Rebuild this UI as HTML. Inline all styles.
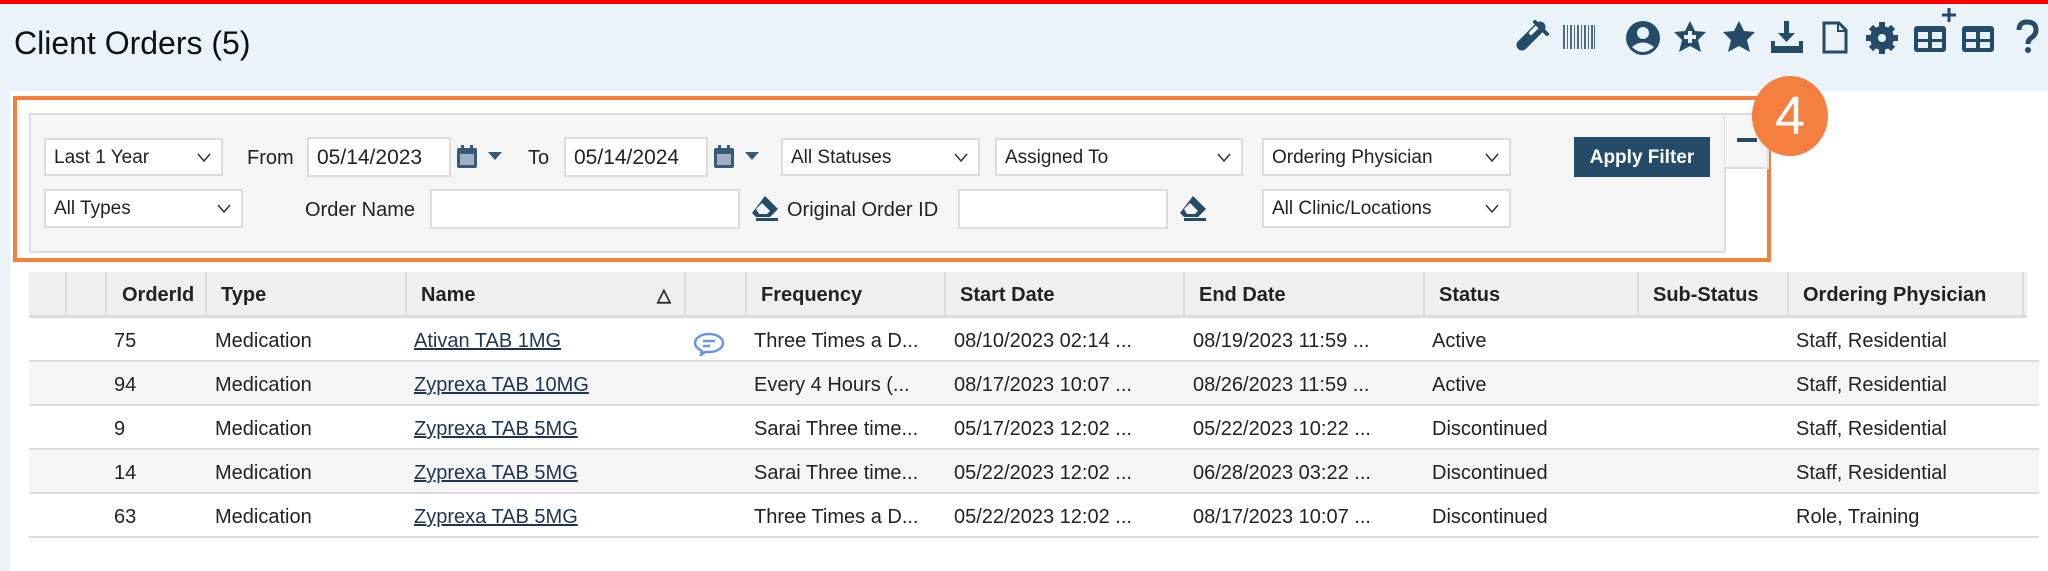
<!DOCTYPE html>
<html><head><meta charset="utf-8"><style>
*{margin:0;padding:0;box-sizing:border-box}
body{width:2048px;height:571px;position:relative;overflow:hidden;background:#fff;font-family:"Liberation Sans",sans-serif;color:#222}
.a{position:absolute}
.sel,.inp{position:absolute;background:#fff;border:2px solid #dcdcdc;font-size:19px;line-height:36px;padding-left:8px;color:#222}
.sel svg{position:absolute;right:10px;top:13px}
.lbl{position:absolute;font-size:20px;color:#222}
.th{position:absolute;top:272px;height:46px;border-right:2px solid #dcdcdc;font-weight:bold;font-size:20px;line-height:46px;padding-left:14px}
.row{position:absolute;left:29px;width:2010px;height:44px;border-bottom:2px solid #dcdcdc}
.c{position:absolute;font-size:20px;line-height:44px;white-space:nowrap}
.lk{color:#1d3550;text-decoration:underline}
</style></head><body>
<div class="a" style="left:0;top:0;width:2048px;height:4px;background:#f00"></div>
<div class="a" style="left:0;top:4px;width:2048px;height:87px;background:#eaf2fa"></div>
<div class="a" style="left:0;top:91px;width:10px;height:480px;background:#eaf2fa"></div>
<div class="a" style="left:14px;top:25px;font-size:32px;color:#111">Client Orders (5)</div>

<!-- header icons -->
<svg class="a" style="left:1510px;top:4px" width="535" height="54" viewBox="1510 4 535 54" fill="#244b68">
<path d="M1540 27 L1522 45" stroke="#244b68" stroke-width="11" stroke-linecap="round"/>
<path d="M1538 26 L1531 33" stroke="#eaf2fa" stroke-width="4" stroke-linecap="round"/>
<path d="M1535 22 L1547 34" stroke="#244b68" stroke-width="4" stroke-linecap="round"/>
<g fill="#4a6a88"><rect x="1563" y="25" width="2" height="24"/><rect x="1567" y="25" width="1" height="24"/><rect x="1570" y="25" width="2" height="24"/><rect x="1574" y="25" width="1" height="24"/><rect x="1577" y="25" width="2" height="24"/><rect x="1581" y="25" width="1" height="24"/><rect x="1584" y="25" width="2" height="24"/><rect x="1588" y="25" width="1" height="24"/><rect x="1591" y="25" width="2" height="24"/><rect x="1594" y="25" width="1" height="24"/></g>
<circle cx="1643" cy="38" r="17"/><circle cx="1643" cy="33" r="6" fill="#eaf2fa"/><path d="M1632 47 q11 -9 22 0 q-5 5 -11 5 q-6 0 -11 -5z" fill="#eaf2fa"/>
<path d="M1690 21 l5 10 11 1 -8 8 3 12 -11 -6 -11 6 3 -12 -8 -8 11 -1z"/><path d="M1688 31h4v4h4v4h-4v4h-4v-4h-4v-4h4z" fill="#eaf2fa"/>
<path d="M1739 21 l5 10 11 1 -8 8 3 12 -11 -6 -11 6 3 -12 -8 -8 11 -1z"/>
<path d="M1784 21h5v12h6l-8.5 9 -8.5 -9h6z"/><path d="M1771 41h4v5h24v-5h4v12h-32z"/>
<path d="M1824 23h15l7 7v22h-22z" fill="none" stroke="#244b68" stroke-width="3"/><path d="M1838 23v8h8" fill="none" stroke="#244b68" stroke-width="2"/>
<circle cx="1882" cy="38" r="12"/><g stroke="#244b68" stroke-width="6"><path d="M1882 22v32M1866 38h32M1871 27l22 22M1893 27l-22 22"/></g><circle cx="1882" cy="38" r="4" fill="#eaf2fa"/>
<rect x="1914" y="26" width="32" height="26" rx="3"/><g fill="#eaf2fa"><rect x="1918" y="32" width="10" height="7"/><rect x="1932" y="32" width="10" height="7"/><rect x="1918" y="42" width="10" height="6"/><rect x="1932" y="42" width="10" height="6"/></g>
<path d="M1949 8v14M1942 15h14" stroke="#244b68" stroke-width="3"/>
<rect x="1962" y="26" width="32" height="26" rx="3"/><g fill="#eaf2fa"><rect x="1966" y="32" width="10" height="7"/><rect x="1980" y="32" width="10" height="7"/><rect x="1966" y="42" width="10" height="6"/><rect x="1980" y="42" width="10" height="6"/></g>
<path d="M2019 30 q0 -8 8 -8 q9 0 9 8 q0 5 -5 8 q-3 2 -3 6" fill="none" stroke="#244b68" stroke-width="5"/><circle cx="2028" cy="50" r="3"/>
</svg>

<!-- orange highlight box -->
<div class="a" style="left:13px;top:96px;width:1758px;height:166px;border:4px solid #f47f3e"></div>
<div class="a" style="left:29px;top:113px;width:1697px;height:140px;background:#f5f5f5;border:2px solid #ddd"></div>
<div class="a" style="left:1725px;top:113px;width:44px;height:56px;background:#f5f5f5;border:2px solid #ddd;border-left:none"></div>
<div class="a" style="left:1737px;top:138px;width:20px;height:4px;background:#244b68"></div>
<div class="a" style="left:1752px;top:76px;width:76px;height:80px;border-radius:50%;background:#f47f3e;color:#fff;font-size:54px;line-height:80px;text-align:center">4</div>

<!-- row 1 -->
<div class="sel" style="left:44px;top:138px;width:179px;height:38px">Last 1 Year<svg width="14" height="10"><path d="M1 1l6 7 6-7" fill="none" stroke="#333" stroke-width="1.5"/></svg></div>
<div class="lbl" style="left:247px;top:147px">From</div>
<div class="inp" style="left:307px;top:137px;width:144px;height:40px;font-size:21px;line-height:38px">05/14/2023</div>
<svg class="a" style="left:456px;top:144px" width="50" height="26"><rect x="1" y="4" width="20" height="20" rx="2" fill="#385a7a"/><rect x="4" y="10" width="14" height="11" fill="#9fb0c2"/><rect x="5" y="1" width="3" height="6" fill="#385a7a"/><rect x="14" y="1" width="3" height="6" fill="#385a7a"/><path d="M32 8h14l-7 8z" fill="#385a7a"/></svg>
<div class="lbl" style="left:528px;top:147px">To</div>
<div class="inp" style="left:564px;top:137px;width:144px;height:40px;font-size:21px;line-height:38px">05/14/2024</div>
<svg class="a" style="left:713px;top:144px" width="50" height="26"><rect x="1" y="4" width="20" height="20" rx="2" fill="#385a7a"/><rect x="4" y="10" width="14" height="11" fill="#9fb0c2"/><rect x="5" y="1" width="3" height="6" fill="#385a7a"/><rect x="14" y="1" width="3" height="6" fill="#385a7a"/><path d="M32 8h14l-7 8z" fill="#385a7a"/></svg>
<div class="sel" style="left:781px;top:138px;width:199px;height:38px">All Statuses<svg width="14" height="10"><path d="M1 1l6 7 6-7" fill="none" stroke="#333" stroke-width="1.5"/></svg></div>
<div class="sel" style="left:995px;top:138px;width:248px;height:38px">Assigned To<svg width="14" height="10"><path d="M1 1l6 7 6-7" fill="none" stroke="#333" stroke-width="1.5"/></svg></div>
<div class="sel" style="left:1262px;top:138px;width:249px;height:38px">Ordering Physician<svg width="14" height="10"><path d="M1 1l6 7 6-7" fill="none" stroke="#333" stroke-width="1.5"/></svg></div>
<div class="a" style="left:1574px;top:137px;width:136px;height:40px;background:#244b68;color:#fff;font-weight:bold;font-size:19px;line-height:42px;text-align:center">Apply Filter</div>

<!-- row 2 -->
<div class="sel" style="left:44px;top:189px;width:199px;height:39px">All Types<svg width="14" height="10"><path d="M1 1l6 7 6-7" fill="none" stroke="#333" stroke-width="1.5"/></svg></div>
<div class="lbl" style="left:305px;top:199px">Order Name</div>
<div class="inp" style="left:430px;top:189px;width:310px;height:40px"></div>
<svg class="a" style="left:750px;top:194px" width="30" height="28"><path d="M15 2l13 13-8 8h-14l-4-4z" fill="#244b68"/><path d="M6 15l6-6 8 8-3 3h-8z" fill="#f5f5f5"/><rect x="6" y="24" width="22" height="3" fill="#244b68"/></svg>
<div class="lbl" style="left:787px;top:199px">Original Order ID</div>
<div class="inp" style="left:958px;top:189px;width:210px;height:40px"></div>
<svg class="a" style="left:1178px;top:194px" width="30" height="28"><path d="M15 2l13 13-8 8h-14l-4-4z" fill="#244b68"/><path d="M6 15l6-6 8 8-3 3h-8z" fill="#f5f5f5"/><rect x="6" y="24" width="22" height="3" fill="#244b68"/></svg>
<div class="sel" style="left:1262px;top:189px;width:249px;height:39px">All Clinic/Locations<svg width="14" height="10"><path d="M1 1l6 7 6-7" fill="none" stroke="#333" stroke-width="1.5"/></svg></div>

<!-- table header -->
<div class="a" style="left:29px;top:272px;width:1998px;height:46px;background:#efefef;border-bottom:3px solid #dcdcdc"></div>
<div class="th" style="left:29px;width:38px"></div>
<div class="th" style="left:67px;width:40px"></div>
<div class="th" style="left:107px;width:100px;padding-left:15px">OrderId</div>
<div class="th" style="left:207px;width:200px">Type</div>
<div class="th" style="left:407px;width:279px">Name<span style="position:absolute;left:250px;font-weight:bold;font-size:18px">&#9651;</span></div>
<div class="th" style="left:686px;width:61px"></div>
<div class="th" style="left:747px;width:199px">Frequency</div>
<div class="th" style="left:946px;width:239px">Start Date</div>
<div class="th" style="left:1185px;width:240px">End Date</div>
<div class="th" style="left:1425px;width:214px">Status</div>
<div class="th" style="left:1639px;width:150px">Sub-Status</div>
<div class="th" style="left:1789px;width:235px">Ordering Physician</div>

<!-- rows -->
<div class="row" style="top:318px;background:#fff"></div>
<div class="row" style="top:362px;background:#f5f5f5"></div>
<div class="row" style="top:406px;background:#fff"></div>
<div class="row" style="top:450px;background:#f5f5f5"></div>
<div class="row" style="top:494px;background:#fff"></div>
<svg class="a" style="left:692px;top:332px" width="34" height="24"><path d="M17 2c8 0 14 4 14 9s-6 9-14 9c-2 0-3 0-4 0l-4 3 1-4c-4-2-7-5-7-8 0-5 6-9 14-9z" fill="none" stroke="#6a96e8" stroke-width="2.5"/><path d="M11 9h12M11 14h7" stroke="#6a96e8" stroke-width="2.5"/></svg>

<div class="c" style="left:114px;top:319px">75</div><div class="c" style="left:215px;top:319px">Medication</div><div class="c lk" style="left:414px;top:319px">Ativan TAB 1MG</div><div class="c" style="left:754px;top:319px">Three Times a D...</div><div class="c" style="left:954px;top:319px">08/10/2023 02:14 ...</div><div class="c" style="left:1193px;top:319px">08/19/2023 11:59 ...</div><div class="c" style="left:1432px;top:319px">Active</div><div class="c" style="left:1796px;top:319px">Staff, Residential</div>
<div class="c" style="left:114px;top:363px">94</div><div class="c" style="left:215px;top:363px">Medication</div><div class="c lk" style="left:414px;top:363px">Zyprexa TAB 10MG</div><div class="c" style="left:754px;top:363px">Every 4 Hours (...</div><div class="c" style="left:954px;top:363px">08/17/2023 10:07 ...</div><div class="c" style="left:1193px;top:363px">08/26/2023 11:59 ...</div><div class="c" style="left:1432px;top:363px">Active</div><div class="c" style="left:1796px;top:363px">Staff, Residential</div>
<div class="c" style="left:114px;top:407px">9</div><div class="c" style="left:215px;top:407px">Medication</div><div class="c lk" style="left:414px;top:407px">Zyprexa TAB 5MG</div><div class="c" style="left:754px;top:407px">Sarai Three time...</div><div class="c" style="left:954px;top:407px">05/17/2023 12:02 ...</div><div class="c" style="left:1193px;top:407px">05/22/2023 10:22 ...</div><div class="c" style="left:1432px;top:407px">Discontinued</div><div class="c" style="left:1796px;top:407px">Staff, Residential</div>
<div class="c" style="left:114px;top:451px">14</div><div class="c" style="left:215px;top:451px">Medication</div><div class="c lk" style="left:414px;top:451px">Zyprexa TAB 5MG</div><div class="c" style="left:754px;top:451px">Sarai Three time...</div><div class="c" style="left:954px;top:451px">05/22/2023 12:02 ...</div><div class="c" style="left:1193px;top:451px">06/28/2023 03:22 ...</div><div class="c" style="left:1432px;top:451px">Discontinued</div><div class="c" style="left:1796px;top:451px">Staff, Residential</div>
<div class="c" style="left:114px;top:495px">63</div><div class="c" style="left:215px;top:495px">Medication</div><div class="c lk" style="left:414px;top:495px">Zyprexa TAB 5MG</div><div class="c" style="left:754px;top:495px">Three Times a D...</div><div class="c" style="left:954px;top:495px">05/22/2023 12:02 ...</div><div class="c" style="left:1193px;top:495px">08/17/2023 10:07 ...</div><div class="c" style="left:1432px;top:495px">Discontinued</div><div class="c" style="left:1796px;top:495px">Role, Training</div>
</body></html>
